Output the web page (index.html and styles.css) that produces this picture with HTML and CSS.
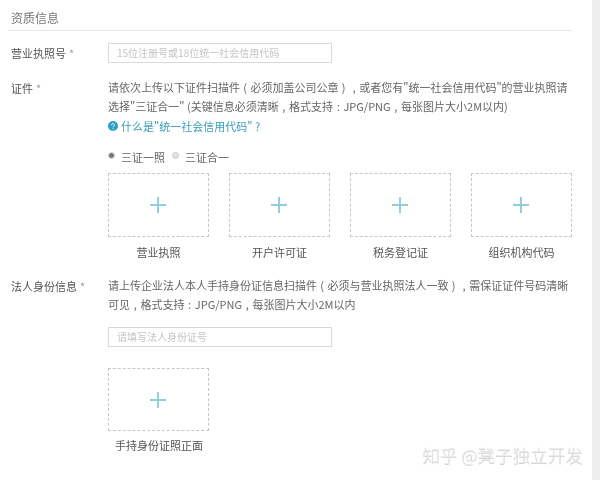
FILE: index.html
```html
<!DOCTYPE html>
<html lang="zh">
<head>
<meta charset="utf-8">
<title>资质信息</title>
<link rel="stylesheet" href="styles.css">
</head>
<body>
<div class="page">
  <main class="content">
    <h2 class="title">资质信息</h2>
    <div class="row row-license">
      <div class="label">营业执照号<span class="req">*</span></div>
      <div class="field"><div class="input">15位注册号或18位统一社会信用代码</div></div>
    </div>
    <div class="row row-cert">
      <div class="label">证件<span class="req">*</span></div>
      <div class="field">
        <p class="desc">请依次上传以下证件扫描件<span class="p">(</span>必须加盖公司公章<span class="p">)</span><span class="p">,</span>或者您有"统一社会信用代码"的营业执照请<br>选择"三证合一" (关键信息必须清晰<span class="p">,</span>格式支持<span class="p">:</span>JPG/PNG<span class="p">,</span>每张图片大小2M以内)</p>
        <div class="help">
          <svg class="help-icon" viewBox="0 0 10 10"><circle cx="5" cy="5" r="5" fill="#2d9fc4"/><path d="M3.5 4a1.5 1.4 0 1 1 2.2 1.2c-.5.3-.7.5-.7 1" fill="none" stroke="#fff" stroke-width="1"/><circle cx="5" cy="7.8" r=".6" fill="#fff"/></svg>
          <span class="help-text">什么是"统一社会信用代码"<span class="p">?</span></span>
        </div>
        <div class="radios">
          <span class="radio-item"><span class="radio radio-on"></span>三证一照</span>
          <span class="radio-item"><span class="radio"></span>三证合一</span>
        </div>
        <div class="uploads">
          <div class="upload"><div class="box"><span class="plus"></span></div><div class="cap">营业执照</div></div>
          <div class="upload"><div class="box"><span class="plus"></span></div><div class="cap">开户许可证</div></div>
          <div class="upload"><div class="box"><span class="plus"></span></div><div class="cap">税务登记证</div></div>
          <div class="upload"><div class="box"><span class="plus"></span></div><div class="cap">组织机构代码</div></div>
        </div>
      </div>
    </div>
    <div class="row row-legal">
      <div class="label">法人身份信息<span class="req">*</span></div>
      <div class="field">
        <p class="desc">请上传企业法人本人手持身份证信息扫描件<span class="p">(</span>必须与营业执照法人一致<span class="p">)</span><span class="p">,</span>需保证证件号码清晰<br>可见<span class="p">,</span>格式支持<span class="p">:</span>JPG/PNG<span class="p">,</span>每张图片大小2M以内</p>
        <div class="input input-id">请填写法人身份证号</div>
        <div class="uploads uploads-id">
          <div class="upload"><div class="box box-id"><span class="plus"></span></div><div class="cap cap-id">手持身份证照正面</div></div>
        </div>
      </div>
    </div>
    <div class="mark">知乎 @凳子独立开发</div>
  </main>
  <aside class="strip"></aside>
</div>
</body>
</html>
```

FILE: styles.css
```css
* { box-sizing: border-box; }
html, body { margin: 0; padding: 0; }
body {
  width: 600px;
  height: 480px;
  overflow: hidden;
  background: #fff;
  color: #666;
  font-family: "Noto Sans CJK SC", "Liberation Sans", sans-serif;
  font-size: 11px;
}
.page { display: flex; height: 480px; filter: blur(0.3px); }
.content { position: relative; flex: 1; padding: 0 20px 0 8px; }
.strip { width: 8px; background: #eeeeee; }
.title {
  margin: 0;
  height: 31px;
  padding: 10px 0 0 3px;
  border-bottom: 1px solid #e6e6e6;
  font-size: 12px;
  line-height: 16px;
  font-weight: 400;
  color: #777;
}
.row { display: flex; }
.row-license { margin-top: 12px; }
.row-cert { margin-top: 15px; }
.row-legal { margin-top: 15px; }
.label { width: 100px; padding-left: 3px; font-size: 11px; line-height: 20px; color: #555; white-space: nowrap; }
.req { margin-left: 3px; color: #999; }
.field { flex: 1; min-width: 0; }
.input {
  width: 224px;
  height: 20px;
  padding-left: 8px;
  border: 1px solid #d9d9d9;
  font-size: 10px;
  line-height: 18px;
  color: #c4c4c4;
}
.desc { margin: 0; font-size: 11px; line-height: 19px; color: #666; white-space: nowrap; }
.p { display: inline-block; width: 10.4px; text-align: center; }
.help { display: flex; align-items: center; gap: 3px; height: 19px; color: #3c9dba; }
.help-icon { width: 10px; height: 10px; }
.help-text { font-size: 11px; }
.radios { display: flex; gap: 7px; margin-top: 12px; height: 20px; align-items: center; color: #666; }
.radio-item { display: flex; align-items: center; gap: 6px; }
.radio { width: 7px; height: 7px; margin-top: -3px; border-radius: 50%; background: #e4e4e4; border: 1px solid #c8c8c8; }
.radio-on { background: #777; border: 1px solid #ddd; }
.uploads { display: flex; gap: 20px; margin-top: 6px; }
.upload { width: 101px; text-align: center; }
.box {
  display: flex;
  align-items: center;
  justify-content: center;
  height: 64px;
  border: 1px dashed #c4c8ca;
}
.box-id { height: 63px; }
.plus { position: relative; width: 16px; height: 16px; margin-left: -1px; }
.plus::before, .plus::after { content: ""; position: absolute; background: #93cde2; }
.plus::before { left: 0; right: 0; top: 7px; height: 2px; }
.plus::after { top: 0; bottom: 0; left: 7px; width: 2px; }
.cap { margin-top: 6px; line-height: 18px; font-size: 11px; color: #555; white-space: nowrap; }
.cap-id { margin-top: 5px; padding-left: 1px; }
.input-id { margin-top: 13px; }
.uploads-id { margin-top: 21px; }
.mark {
  position: absolute;
  left: 422px;
  top: 443px;
  font-size: 17.6px;
  font-weight: 300;
  line-height: 24px;
  color: #e8e8e8;
  text-shadow: 0.5px 0.5px 0 #cfcfcf;
  white-space: nowrap;
}
```
